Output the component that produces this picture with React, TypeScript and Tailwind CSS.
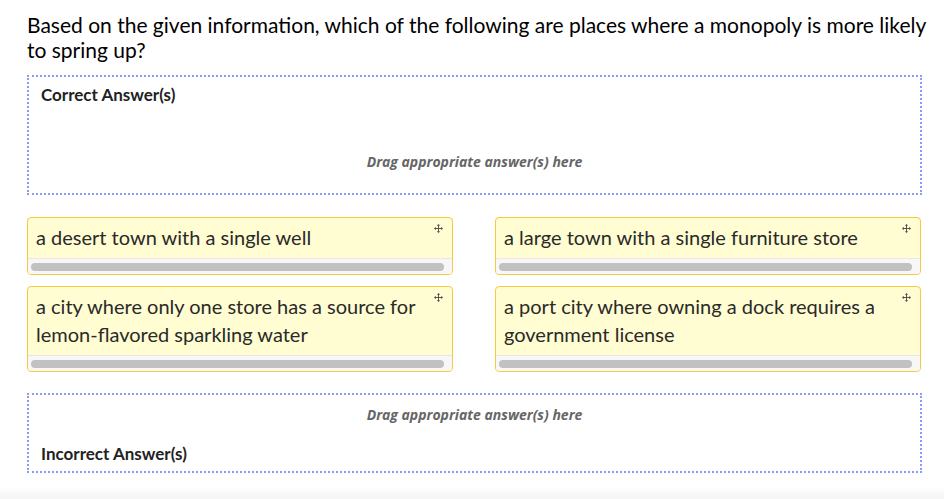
const cards = [
  { text: "a desert town with a single well", h: "h-[58px]" },
  { text: "a large town with a single furniture store", h: "h-[58px]" },
  { text: "a city where only one store has a source for lemon-flavored sparkling water", h: "h-[86px]" },
  { text: "a port city where owning a dock requires a government license", h: "h-[86px]" },
];

function MoveIcon() {
  return (
    <svg width="9" height="9" viewBox="0 0 9 9" className="text-[#555]" fill="currentColor">
      <rect x="4" y="1" width="1" height="7" />
      <rect x="1" y="4" width="7" height="1" />
      <polygon points="4.5,0 2.8,1.8 6.2,1.8" />
      <polygon points="4.5,9 2.8,7.2 6.2,7.2" />
      <polygon points="0,4.5 1.8,2.8 1.8,6.2" />
      <polygon points="9,4.5 7.2,2.8 7.2,6.2" />
    </svg>
  );
}

function AnswerCard({ text, h }: { text: string; h: string }) {
  return (
    <div className={`relative flex flex-col overflow-hidden rounded-[4px] border border-[#f6c945] bg-[#fffdd1] ${h}`}>
      <span className="absolute right-[9px] top-[6px]">
        <MoveIcon />
      </span>
      <p className="flex-1 pl-[8px] pr-[30px] pt-[5px] text-[20px] leading-[28px] text-[#2a2a2a]">{text}</p>
      <div className="flex h-[16px] items-center border-t border-[#e8e8e8] bg-[#f7f7f7] px-[3px]">
        <div className="h-[8px] w-[413px] rounded-full bg-[#c1c1c1]" />
      </div>
    </div>
  );
}

function DropHint() {
  return (
    <p className="text-center text-[14px] font-bold italic text-[#666]" style={{ fontFamily: '"Open Sans", sans-serif' }}>
      Drag appropriate answer(s) here
    </p>
  );
}

export default function App() {
  return (
    <div className="flex min-h-screen w-[944px] flex-col bg-white" style={{ fontFamily: 'Lato, "Noto Sans", sans-serif' }}>
      <div className="px-[27px] pt-[12px]">
        <p className="w-[905px] text-[21px] leading-[25px] text-black">
          Based on the given information, which of the following are places where a monopoly is more likely to spring up?
        </p>

        <div className="mr-[-5px] mt-[13px] flex h-[120px] flex-col border-2 border-dotted border-[#8c9cf2] px-[12px]">
          <p className="pt-[8px] text-[17px] font-bold leading-[20px] text-[#222]">Correct Answer(s)</p>
          <div className="mt-[46px]">
            <DropHint />
          </div>
        </div>

        <div className="mt-[22px] grid w-[894px] grid-cols-2 items-start gap-x-[42px] gap-y-[11px]">
          {cards.map((c) => (
            <AnswerCard key={c.text} text={c.text} h={c.h} />
          ))}
        </div>

        <div className="mr-[-5px] mt-[21px] flex h-[80px] flex-col border-2 border-dotted border-[#8c9cf2] px-[12px]">
          <div className="mt-[9px]">
            <DropHint />
          </div>
          <p className="mt-[19px] text-[17px] font-bold leading-[20px] text-[#222]">Incorrect Answer(s)</p>
        </div>
      </div>
      <div className="mt-[14px] flex-1 bg-gradient-to-b from-white to-[#f4f4f4]" />
    </div>
  );
}
